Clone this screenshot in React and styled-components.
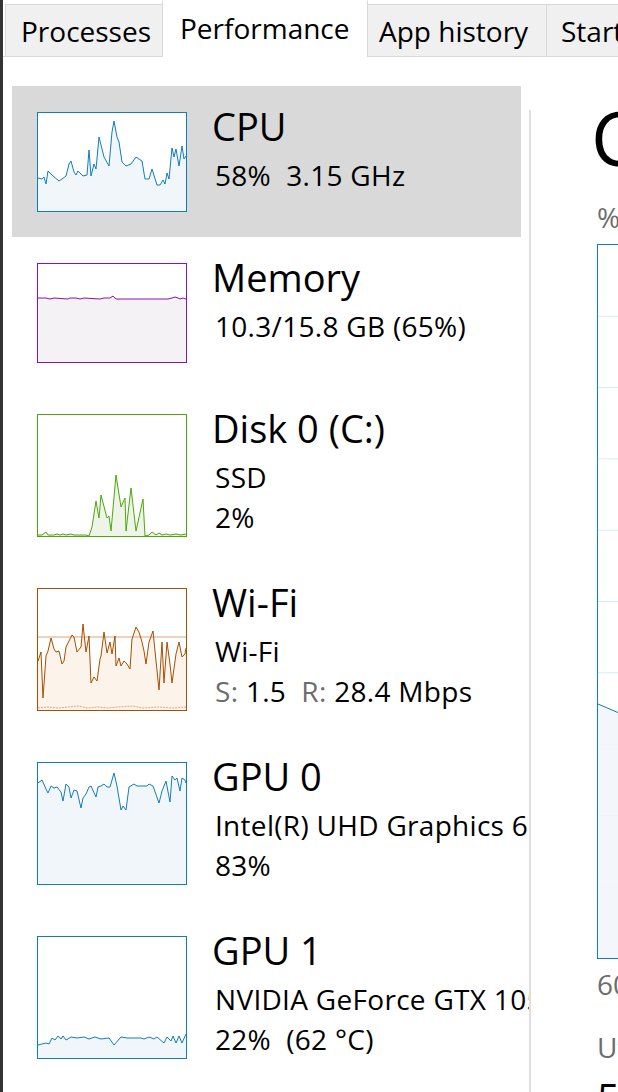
import styled, { createGlobalStyle } from "styled-components";

const GlobalStyle = createGlobalStyle`
  html, body {
    margin: 0;
    padding: 0;
    background: #ffffff;
    overflow: hidden;
  }
  * {
    box-sizing: border-box;
  }
`;

const Window = styled.div`
  width: 618px;
  height: 1092px;
  display: flex;
  flex-direction: column;
  border-left: 3px solid #333333;
  font-family: "Open Sans", "Noto Sans", sans-serif;
  color: #000000;
  overflow: hidden;
`;

const TabBar = styled.div`
  height: 57px;
  flex-shrink: 0;
  display: flex;
  align-items: flex-end;
  padding-left: 2px;
  border-bottom: 1px solid #d9d9d9;
`;

const Tab = styled.div`
  flex-shrink: 0;
  width: ${(p) => p.$width}px;
  height: ${(p) => (p.$active ? 57 : 52)}px;
  margin-bottom: ${(p) => (p.$active ? -1 : 0)}px;
  margin-right: -1px;
  padding: ${(p) => (p.$active ? 3 : 2)}px 0 0 ${(p) => p.$pad}px;
  border: 1px solid #d9d9d9;
  border-bottom: none;
  border-top-color: ${(p) => (p.$active ? "#ffffff" : "#d9d9d9")};
  background: ${(p) => (p.$active ? "#ffffff" : "#f0f0f0")};
  font-size: 28px;
  line-height: 48px;
  white-space: nowrap;
  position: relative;
  z-index: ${(p) => (p.$active ? 1 : 0)};
`;

const Main = styled.div`
  flex: 1;
  display: flex;
  min-height: 0;
`;

const Sidebar = styled.div`
  width: 526px;
  flex-shrink: 0;
  padding: 29px 0 0 9px;
  display: flex;
  flex-direction: column;
  overflow: hidden;
`;

const Item = styled.div`
  width: 509px;
  flex-shrink: 0;
  display: flex;
  align-items: flex-start;
  gap: 26px;
  padding: 26px 0 25px 25px;
  background: ${(p) => (p.$selected ? "#d9d9d9" : "transparent")};
`;

const Thumb = styled.div`
  width: 150px;
  height: ${(p) => p.$height}px;
  flex-shrink: 0;
  border: 1px solid ${(p) => p.$color};
  background: #ffffff;

  svg {
    display: block;
    width: 100%;
    height: 100%;
  }
`;

const Info = styled.div`
  margin-top: -14px;
  white-space: nowrap;
`;

const Title = styled.div`
  font-size: 38px;
  line-height: 56px;
  margin-left: -1px;
  margin-bottom: 1px;
`;

const Sub = styled.div`
  font-size: 28px;
  line-height: 40px;
  letter-spacing: 0.3px;
  margin-left: 2px;
  white-space: pre;
`;

const Dim = styled.span`
  color: #6d6d6d;
`;

const Splitter = styled.div`
  width: 2px;
  flex-shrink: 0;
  margin-top: 53px;
  background: #dedede;
`;

const Detail = styled.div`
  flex-shrink: 0;
  width: 640px;
  padding: 35px 0 0 66px;
  display: flex;
  flex-direction: column;
`;

const DetailTitle = styled.div`
  font-size: 75px;
  line-height: 90px;
  margin-left: -6px;
`;

const LabelRow = styled.div`
  width: 560px;
  display: flex;
  justify-content: space-between;
  font-size: 28px;
  line-height: 36px;
  color: #6d6d6d;
  margin-top: ${(p) => p.$gap}px;
`;

const Chart = styled.div`
  width: 560px;
  height: 715px;
  margin-top: 9px;
  border: 1px solid #117dbb;
  background: #ffffff;

  svg {
    display: block;
    width: 100%;
    height: 100%;
  }
`;

const Value = styled.div`
  font-size: 40px;
  line-height: 50px;
  margin-top: 8px;
`;

const Sparkline = ({ points, height, color, fill, extra }) => {
  const h = height - 2;
  const line = points.map(([x, y]) => `${x},${y}`).join(" ");
  const area = `M0,${h} L${line.split(" ").join(" L")} L148,${h} Z`;
  return (
    <svg viewBox={`0 0 148 ${h}`} preserveAspectRatio="none">
      <path d={area} fill={fill} />
      {extra}
      <polyline
        points={line}
        fill="none"
        stroke={color}
        strokeWidth="1"
        vectorEffect="non-scaling-stroke"
      />
    </svg>
  );
};

const cpuPts = [
  [0, 65], [4, 66], [6, 64], [8, 71], [10, 58], [14, 62], [21, 68], [24, 66],
  [28, 63], [31, 51], [33, 48], [36, 59], [38, 62], [40, 58], [45, 63], [49, 62],
  [51, 37], [53, 63], [56, 51], [58, 56], [61, 24], [66, 44], [71, 53], [74, 19],
  [76, 8], [79, 24], [81, 29], [84, 49], [88, 53], [93, 51], [98, 44], [104, 48],
  [107, 66], [111, 66], [114, 56], [119, 72], [122, 72], [125, 67], [127, 71],
  [129, 60], [131, 66], [134, 35], [136, 44], [138, 36], [141, 53], [144, 33],
  [146, 46], [148, 43],
];

const memPts = [
  [0, 34], [8, 34], [12, 35], [16, 34], [30, 35], [32, 34], [38, 34], [42, 35],
  [46, 34], [62, 35], [66, 34], [72, 34], [75, 32], [78, 35], [100, 35],
  [130, 35], [134, 34], [137, 33], [140, 34], [142, 35], [145, 34], [148, 35],
];

const diskPts = [
  [0, 120], [4, 120], [8, 117], [10, 120], [16, 120], [19, 119], [22, 120],
  [25, 119], [28, 120], [33, 119], [36, 120], [48, 120], [51, 121], [54, 112],
  [58, 86], [61, 103], [63, 80], [69, 103], [71, 101], [73, 116], [78, 60],
  [83, 92], [87, 83], [88, 116], [93, 73], [98, 116], [105, 84], [107, 121],
  [111, 120], [114, 117], [118, 120], [121, 118], [124, 120], [128, 119],
  [132, 120], [138, 119], [143, 120], [148, 119],
];

const wifiPts = [
  [0, 72], [3, 63], [5, 109], [8, 67], [10, 62], [13, 49], [16, 60], [18, 63],
  [21, 62], [24, 75], [26, 72], [28, 58], [32, 50], [34, 46], [36, 48], [39, 63],
  [43, 58], [45, 35], [48, 63], [51, 47], [53, 94], [56, 88], [59, 92], [62, 70],
  [63, 67], [66, 43], [69, 64], [72, 53], [74, 65], [77, 47], [78, 77], [81, 69],
  [83, 77], [86, 72], [89, 75], [92, 80], [94, 50], [98, 38], [101, 43],
  [104, 53], [106, 62], [108, 75], [111, 53], [115, 42], [117, 62], [121, 101],
  [124, 53], [126, 94], [129, 53], [132, 75], [134, 94], [138, 65], [141, 53],
  [144, 68], [147, 65], [148, 59],
];

const gpu0Pts = [
  [0, 20], [4, 17], [8, 26], [10, 30], [13, 23], [16, 25], [19, 24], [23, 29],
  [25, 38], [28, 21], [31, 24], [33, 35], [36, 27], [39, 28], [43, 45], [45, 35],
  [48, 31], [51, 24], [53, 23], [58, 34], [60, 24], [63, 23], [66, 21], [69, 24],
  [72, 24], [76, 10], [79, 23], [83, 47], [85, 43], [88, 47], [91, 24], [96, 21],
  [99, 23], [103, 23], [109, 23], [111, 21], [115, 23], [121, 40], [124, 28],
  [128, 18], [132, 39], [134, 13], [137, 17], [139, 15], [142, 28], [144, 15],
  [147, 17], [148, 20],
];

const gpu1Pts = [
  [0, 108], [4, 107], [8, 106], [11, 107], [14, 101], [17, 103], [20, 99],
  [23, 102], [25, 99], [28, 103], [33, 100], [39, 101], [46, 100], [51, 102],
  [57, 100], [63, 102], [71, 101], [76, 108], [83, 100], [89, 101], [96, 101],
  [103, 101], [106, 102], [111, 100], [116, 102], [119, 100], [126, 106],
  [129, 100], [133, 104], [135, 99], [138, 106], [141, 99], [144, 106],
  [148, 97],
];

const wifiSend = [
  [0, 119], [10, 118], [20, 119], [30, 118], [40, 117], [50, 119], [60, 118],
  [70, 119], [80, 118], [95, 117], [105, 119], [120, 118], [135, 119], [148, 118],
];

const wifiExtra = (
  <>
    <line
      x1="0" y1="48" x2="148" y2="48"
      stroke="#dca57a" strokeWidth="1" vectorEffect="non-scaling-stroke"
    />
    <polyline
      points={wifiSend.map(([x, y]) => `${x},${y}`).join(" ")}
      fill="none" stroke="#e9a47a" strokeWidth="1" strokeDasharray="2 1"
      vectorEffect="non-scaling-stroke"
    />
  </>
);

const resources = [
  {
    key: "cpu", title: "CPU", lines: ["58%  3.15 GHz"], color: "#117dbb",
    fill: "#f1f6fa", pts: cpuPts, selected: true,
  },
  {
    key: "mem", title: "Memory", lines: ["10.3/15.8 GB (65%)"], color: "#8b12ae",
    fill: "#f4f2f4", pts: memPts,
  },
  {
    key: "disk", title: "Disk 0 (C:)", lines: ["SSD", "2%"], color: "#4da60c",
    fill: "#eff4e8", pts: diskPts,
  },
  {
    key: "wifi", title: "Wi-Fi",
    lines: [
      "Wi-Fi",
      <>
        <Dim>S:</Dim> 1.5  <Dim>R:</Dim> 28.4 Mbps
      </>,
    ],
    color: "#a74f01", fill: "#fcf3eb", pts: wifiPts, extra: wifiExtra,
  },
  {
    key: "gpu0", title: "GPU 0", lines: ["Intel(R) UHD Graphics 630", "83%"],
    color: "#117dbb", fill: "#f1f6fa", pts: gpu0Pts,
  },
  {
    key: "gpu1", title: "GPU 1", lines: ["NVIDIA GeForce GTX 1050", "22%  (62 °C)"],
    color: "#117dbb", fill: "#f1f6fa", pts: gpu1Pts,
  },
];

const tabs = [
  { label: "Processes", width: 158, pad: 15 },
  { label: "Performance", width: 206, pad: 17 },
  { label: "App history", width: 180, pad: 11 },
  { label: "Startup", width: 140, pad: 14 },
];

const chartPts = [
  [0, 459], [21, 468], [40, 440], [60, 452], [85, 410], [110, 430], [140, 395],
  [170, 420], [200, 380], [230, 405], [260, 360], [290, 398], [320, 370],
  [350, 415], [380, 388], [410, 430], [440, 400], [470, 372], [500, 410],
  [530, 385], [558, 400],
];

const CpuChart = () => {
  const rows = [];
  for (let i = 1; i < 10; i++) rows.push(i * 71.3);
  const cols = [];
  for (let i = 1; i < 20; i++) cols.push(i * 27.9);
  const line = chartPts.map(([x, y]) => `${x},${y}`).join(" ");
  return (
    <svg viewBox="0 0 558 713" preserveAspectRatio="none">
      {rows.map((y) => (
        <line key={`r${y}`} x1="0" y1={y} x2="558" y2={y} stroke="#d9eaf4" strokeWidth="1" />
      ))}
      {cols.map((x) => (
        <line key={`c${x}`} x1={x} y1="0" x2={x} y2="713" stroke="#d9eaf4" strokeWidth="1" />
      ))}
      <path d={`M0,713 L${line.split(" ").join(" L")} L558,713 Z`} fill="#f1f6fa" opacity="0.85" />
      <polyline points={line} fill="none" stroke="#117dbb" strokeWidth="1" />
    </svg>
  );
};

const App = () => {
  return (
    <Window>
      <GlobalStyle />
      <TabBar>
        {tabs.map((t, i) => (
          <Tab key={t.label} $width={t.width} $pad={t.pad} $active={i === 1}>
            {t.label}
          </Tab>
        ))}
      </TabBar>
      <Main>
        <Sidebar>
          {resources.map((r) => {
            const h = r.lines.length > 1 ? 123 : 100;
            return (
              <Item key={r.key} $selected={r.selected}>
                <Thumb $color={r.color} $height={h}>
                  <Sparkline
                    points={r.pts}
                    height={h}
                    color={r.color}
                    fill={r.fill}
                    extra={r.extra}
                  />
                </Thumb>
                <Info>
                  <Title>{r.title}</Title>
                  {r.lines.map((l, i) => (
                    <Sub key={i}>{l}</Sub>
                  ))}
                </Info>
              </Item>
            );
          })}
        </Sidebar>
        <Splitter />
        <Detail>
          <DetailTitle>CPU</DetailTitle>
          <LabelRow $gap={17}>
            <span>% Utilization</span>
            <span>100%</span>
          </LabelRow>
          <Chart>
            <CpuChart />
          </Chart>
          <LabelRow $gap={7}>
            <span>60 seconds</span>
            <span>0</span>
          </LabelRow>
          <LabelRow $gap={27}>
            <span>Utilization</span>
          </LabelRow>
          <Value>58%</Value>
        </Detail>
      </Main>
    </Window>
  );
};

export default App;
